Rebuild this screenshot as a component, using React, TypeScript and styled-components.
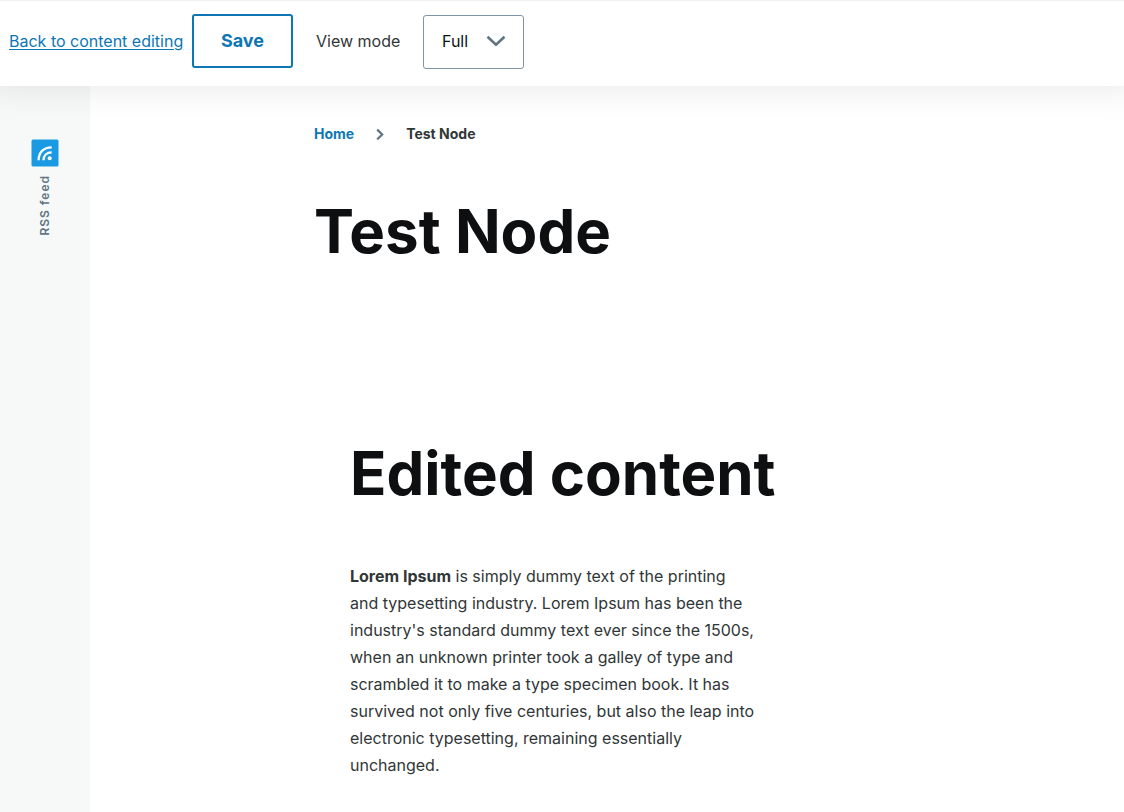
import React from "react";
import styled, { createGlobalStyle } from "styled-components";

const GlobalStyle = createGlobalStyle`
  *, *::before, *::after { box-sizing: border-box; }
  body {
    margin: 0;
    background: #fff;
    color: #313637;
    font-family: Metropolis, Inter, "Open Sans", sans-serif;
    font-size: 16px;
    line-height: 27px;
  }
`;

const Page = styled.div`
  display: flex;
  flex-direction: column;
  min-height: 100vh;
  overflow-x: clip;
`;

const Toolbar = styled.form`
  position: relative;
  display: flex;
  align-items: flex-start;
  height: 86px;
  padding: 13px 9px 0;
  border-top: 1px solid #f0f0f0;
  background: #fff;
  box-shadow: 0 -18px 36px 18px rgba(0, 0, 0, 0.1);
`;

const BackLink = styled.a`
  width: 183px;
  line-height: 54px;
  color: #0d77b5;
  text-decoration: underline;
  text-underline-offset: 2px;
  white-space: nowrap;
`;

const SaveButton = styled.button`
  width: 101px;
  height: 54px;
  padding: 0 0 2px;
  border: 2px solid #0d77b5;
  border-radius: 3px;
  background: #fff;
  color: #0d77b5;
  font: inherit;
  font-size: 18px;
  font-weight: 700;
  cursor: pointer;
`;

const ModeLabel = styled.label`
  width: 107px;
  margin-left: 23px;
  line-height: 54px;
  white-space: nowrap;
`;

const SelectBox = styled.div`
  position: relative;
  margin-top: 1px;

  svg {
    position: absolute;
    top: 20px;
    right: 18px;
    pointer-events: none;
  }
`;

const ModeSelect = styled.select`
  display: block;
  appearance: none;
  width: 101px;
  height: 54px;
  padding: 0 18px 2px;
  border: 1px solid #7e96a7;
  border-radius: 3px;
  background: #fff;
  color: #0d1214;
  font: inherit;
`;

const Body = styled.div`
  display: flex;
  flex: 1;
`;

const SideRail = styled.aside`
  flex: none;
  width: 90px;
  padding-top: 53px;
  background: #f7f9f9;
`;

const FeedLink = styled.a`
  display: flex;
  flex-direction: column;
  align-items: center;
  gap: 8px;
  color: #5e7585;
  text-decoration: none;
`;

const FeedText = styled.span`
  writing-mode: vertical-rl;
  transform: rotate(180deg);
  font-size: 12px;
  font-weight: 600;
  line-height: 18px;
  letter-spacing: 1px;
`;

const Main = styled.main`
  flex: 1;
  padding: 34px 54px 34px 224px;
`;

const Crumbs = styled.ol`
  display: flex;
  align-items: center;
  gap: 22px;
  margin: 0;
  padding: 0;
  list-style: none;
  font-size: 14px;
  font-weight: 700;
  line-height: 27px;

  svg { display: block; }
  a { color: #0d77b5; text-decoration: none; }
`;

const Title = styled.h1`
  margin: 0;
  color: #0d0f11;
  font-size: 60px;
  font-weight: 700;
  line-height: 72px;
`;

const PageTitle = styled(Title)`
  margin-top: 48px;
`;

const Article = styled.article`
  max-width: 443px;
  margin-top: 170px;
  padding-left: 36px;
`;

const ArticleTitle = styled(Title)`
  white-space: nowrap;
`;

const Text = styled.p`
  margin: 54px 0 0;
`;

export default function App() {
  return (
    <Page>
      <GlobalStyle />
      <Toolbar onSubmit={(e) => e.preventDefault()}>
        <BackLink href="#edit">Back to content editing</BackLink>
        <SaveButton type="submit">Save</SaveButton>
        <ModeLabel htmlFor="view-mode">View mode</ModeLabel>
        <SelectBox>
          <ModeSelect id="view-mode" defaultValue="full">
            <option value="full">Full</option>
          </ModeSelect>
          <svg width="20" height="13" viewBox="0 0 20 13" fill="none" aria-hidden="true">
            <path d="M1.5 1.8L10 9.8l8.500-8" stroke="#5e7585" strokeWidth="2.6" />
          </svg>
        </SelectBox>
      </Toolbar>
      <Body>
        <SideRail>
          <FeedLink href="#rss">
            <svg width="28" height="28" viewBox="0 0 28 28" fill="none" aria-hidden="true">
              <rect x="0.5" y="0.5" width="27" height="27" rx="1.5" fill="#1b9ae4" />
              <path d="M7.600 21.200C7.600 13.400 12.500 8.400 20.700 8.400" stroke="#fff" strokeWidth="2.300" />
              <path d="M12.500 21.200C12.500 16.500 15.700 13.400 20.700 13.400" stroke="#fff" strokeWidth="2.300" />
              <circle cx="18.700" cy="19.300" r="2" fill="#fff" />
            </svg>
            <FeedText>RSS feed</FeedText>
          </FeedLink>
        </SideRail>
        <Main>
          <nav aria-label="Breadcrumb">
            <Crumbs>
              <li><a href="#home">Home</a></li>
              <li aria-hidden="true">
                <svg width="8" height="12" viewBox="0 0 8 12" fill="none">
                  <path d="M1.2 1.6L6.200 6.500l-5 4.800" stroke="#5e7585" strokeWidth="2.200" />
                </svg>
              </li>
              <li aria-current="page">Test Node</li>
            </Crumbs>
          </nav>
          <PageTitle>Test Node</PageTitle>
          <Article>
            <ArticleTitle as="h2">Edited content</ArticleTitle>
            <Text>
              <strong>Lorem Ipsum</strong> is simply dummy text of the printing and
              typesetting industry. Lorem Ipsum has been the industry's standard dummy
              text ever since the 1500s, when an unknown printer took a galley of type
              and scrambled it to make a type specimen book. It has survived not only
              five centuries, but also the leap into electronic typesetting, remaining
              essentially unchanged.
            </Text>
          </Article>
        </Main>
      </Body>
    </Page>
  );
}
